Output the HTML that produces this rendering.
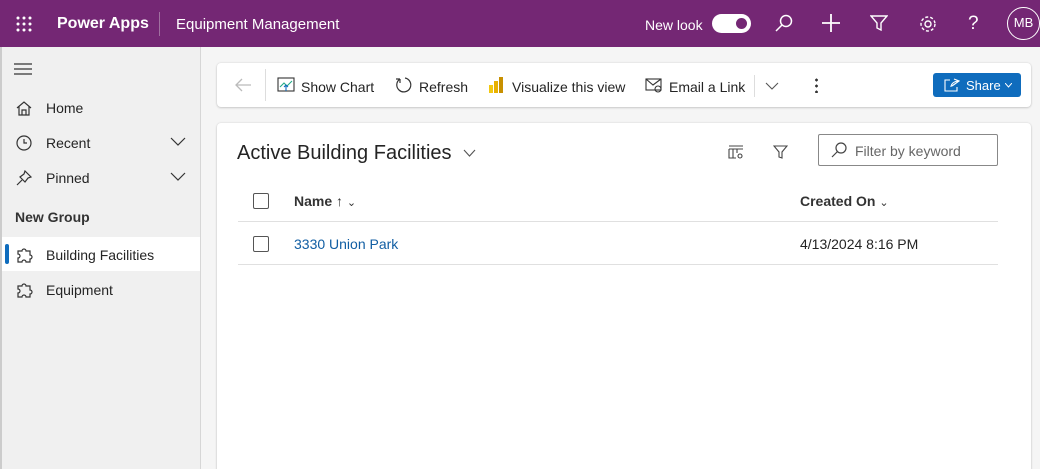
<!DOCTYPE html>
<html><head><style>
*{box-sizing:border-box;margin:0;padding:0}
html,body{width:1040px;height:469px;overflow:hidden}
body{font-family:"Liberation Sans",sans-serif;background:#f5f5f5;position:relative;color:#242424}
.hdr{position:absolute;left:0;top:0;width:1040px;height:47px;background:#742774;color:#fff}
.abs{position:absolute}
.side{position:absolute;left:0;top:47px;width:201px;height:422px;background:#f0f0f0;border-right:1px solid #d6d6d6;border-left:2px solid #ccc}
.nav{position:absolute;left:0;width:198px;height:34px;font-size:14px;color:#242424}
.nav span{position:absolute;left:44px;top:10px}
.card{position:absolute;background:#fff;border-radius:4px;box-shadow:0 0 2px rgba(0,0,0,.12),0 1px 2px rgba(0,0,0,.14)}
.tb{font-size:14px;color:#242424;position:absolute;top:79px}
</style></head><body>
<div class="hdr">
 <svg class="abs" style="left:16px;top:16px" width="16" height="16" fill="#fff"><circle cx="2" cy="2" r="1.5"/><circle cx="8" cy="2" r="1.5"/><circle cx="14" cy="2" r="1.5"/><circle cx="2" cy="8" r="1.5"/><circle cx="8" cy="8" r="1.5"/><circle cx="14" cy="8" r="1.5"/><circle cx="2" cy="14" r="1.5"/><circle cx="8" cy="14" r="1.5"/><circle cx="14" cy="14" r="1.5"/></svg>
 <div class="abs" style="left:57px;top:15px;font-size:16px;font-weight:bold">Power Apps</div>
 <div class="abs" style="left:159px;top:12px;width:1px;height:24px;background:#a070a0"></div>
 <div class="abs" style="left:176px;top:16px;font-size:15px">Equipment Management</div>
 <div class="abs" style="left:645px;top:17px;font-size:14px">New look</div>
 <div class="abs" style="left:712px;top:14px;width:39px;height:19px;border-radius:10px;background:#fff"><div style="position:absolute;right:4px;top:4px;width:11px;height:11px;border-radius:50%;background:#742774"></div></div>
 <svg class="abs" style="left:774px;top:13px" width="20" height="20" fill="none" stroke="#fff" stroke-width="1.5"><circle cx="12" cy="8" r="5.5"/><path d="M8 12 L2 18"/></svg>
 <svg class="abs" style="left:821px;top:13px" width="20" height="20" stroke="#fff" stroke-width="1.8"><path d="M10 1V19M1 10H19"/></svg>
 <svg class="abs" style="left:870px;top:14px" width="18" height="18" fill="none" stroke="#fff" stroke-width="1.4"><path d="M1 2H17L11 9V16L7 14V9Z"/></svg>
 <svg class="abs" style="left:918px;top:14px" width="20" height="20" fill="none" stroke="#fff" stroke-width="1.4"><circle cx="10" cy="10" r="3"/><circle cx="10" cy="10" r="7" stroke-dasharray="3 2"/></svg>
 <div class="abs" style="left:968px;top:13px;font-size:19px">?</div>
 <div class="abs" style="left:1007px;top:7px;width:33px;height:33px;border:1.5px solid #fff;border-radius:50%;font-size:13px;text-align:center;line-height:30px">MB</div>
</div>
<div class="side">
 <svg class="abs" style="left:12px;top:16px" width="18" height="12" stroke="#333" stroke-width="1.2"><path d="M0 1H18M0 6H18M0 11H18"/></svg>
 <div class="nav" style="top:43px"><svg class="abs" style="left:14px;top:10px" width="16" height="16" fill="none" stroke="#333" stroke-width="1.2"><path d="M1 8L8 2L15 8M3 6V15H13V6M6 15V10H10V15"/></svg><span>Home</span></div>
 <div class="nav" style="top:78px"><svg class="abs" style="left:14px;top:10px" width="16" height="16" fill="none" stroke="#333" stroke-width="1.2"><circle cx="8" cy="8" r="7"/><path d="M8 4V8H11"/></svg><span>Recent</span><svg class="abs" style="left:168px;top:12px" width="16" height="9" fill="none" stroke="#333" stroke-width="1.2"><path d="M1 1L8 8L15 1"/></svg></div>
 <div class="nav" style="top:113px"><svg class="abs" style="left:14px;top:10px" width="16" height="16" fill="none" stroke="#333" stroke-width="1.2"><path d="M9 1L15 7L12 8L9 12L4 7L8 4Z M6 10L1 15"/></svg><span>Pinned</span><svg class="abs" style="left:168px;top:12px" width="16" height="9" fill="none" stroke="#333" stroke-width="1.2"><path d="M1 1L8 8L15 1"/></svg></div>
 <div class="abs" style="left:13px;top:162px;font-size:14px;font-weight:bold;color:#333">New Group</div>
 <div class="nav" style="top:190px;background:#fff"><div class="abs" style="left:3px;top:7px;width:4px;height:20px;background:#0f6cbd;border-radius:2px"></div><svg class="abs" style="left:14px;top:9px" width="17" height="17" fill="none" stroke="#333" stroke-width="1.2"><path d="M2 5H6A2 2 0 0 1 10 5H14V9A2 2 0 0 1 14 13V16H10A2 2 0 0 0 6 16H2V12A2 2 0 0 0 2 8Z"/></svg><span>Building Facilities</span></div>
 <div class="nav" style="top:225px"><svg class="abs" style="left:14px;top:9px" width="17" height="17" fill="none" stroke="#333" stroke-width="1.2"><path d="M2 5H6A2 2 0 0 1 10 5H14V9A2 2 0 0 1 14 13V16H10A2 2 0 0 0 6 16H2V12A2 2 0 0 0 2 8Z"/></svg><span>Equipment</span></div>
</div>
<div class="card" style="left:217px;top:63px;width:814px;height:44px"></div>
<svg class="abs" style="left:235px;top:78px" width="16" height="14" fill="none" stroke="#bbb" stroke-width="1.3"><path d="M16 7H1M7 1L1 7L7 13"/></svg>
<div class="abs" style="left:265px;top:69px;width:1px;height:32px;background:#ddd"></div>
<svg class="abs" style="left:277px;top:77px" width="18" height="16" fill="none" stroke="#333" stroke-width="1.1"><rect x="1" y="1" width="16" height="13"/><path d="M3 10L7 6L10 9L15 4" stroke="#2a8"/><path d="M9 14V8M7 10L9 8L11 10" stroke="#0f6cbd"/></svg>
<div class="tb" style="left:301px">Show Chart</div>
<svg class="abs" style="left:395px;top:76px" width="18" height="18" fill="none" stroke="#333" stroke-width="1.2"><path d="M5 3A7 7 0 1 0 10 2M5 3V7M5 3H1"/></svg>
<div class="tb" style="left:419px">Refresh</div>
<svg class="abs" style="left:489px;top:77px" width="14" height="16"><rect x="0" y="8" width="4" height="8" fill="#f2c811"/><rect x="5" y="4" width="4" height="12" fill="#e8b000"/><rect x="10" y="0" width="4" height="16" fill="#c89000"/></svg>
<div class="tb" style="left:512px">Visualize this view</div>
<svg class="abs" style="left:645px;top:78px" width="18" height="15" fill="none" stroke="#333" stroke-width="1.1"><rect x="1" y="1" width="15" height="11"/><path d="M1 1L8 7L16 1"/><circle cx="13" cy="11" r="3"/></svg>
<div class="tb" style="left:669px">Email a Link</div>
<div class="abs" style="left:754px;top:75px;width:1px;height:22px;background:#ddd"></div>
<svg class="abs" style="left:765px;top:82px" width="14" height="8" fill="none" stroke="#555" stroke-width="1.1"><path d="M1 1L7 7L13 1"/></svg>
<div class="abs" style="left:815px;top:77px;width:3px;height:16px;background:radial-gradient(circle,#333 1.3px,transparent 1.5px) 0 0/3px 6px"></div>
<div class="abs" style="left:933px;top:73px;width:88px;height:24px;background:#0f6cbd;border-radius:3px;color:#fff;font-size:13px"><svg class="abs" style="left:11px;top:5px" width="16" height="14" fill="none" stroke="#fff" stroke-width="1.1"><path d="M6 2H1V13H13V9M8 8L15 3L10 1M15 3C10 3 7 6 7 9"/></svg><span class="abs" style="left:33px;top:5px">Share</span><svg class="abs" style="left:72px;top:10px" width="7" height="5" fill="none" stroke="#fff"><path d="M0 0L3.5 4L7 0"/></svg></div>
<div class="card" style="left:217px;top:123px;width:814px;height:350px"></div>
<div class="abs" style="left:237px;top:142px;font-size:20px;color:#242424">Active Building Facilities</div>
<svg class="abs" style="left:463px;top:149px" width="13" height="8" fill="none" stroke="#555" stroke-width="1.1"><path d="M1 1L6.5 7L12 1"/></svg>
<svg class="abs" style="left:728px;top:145px" width="16" height="14" fill="none" stroke="#444" stroke-width="1.1"><path d="M1 1H15M1 4H15M1 4V13H8M5 4V13M9 4V8"/><circle cx="12" cy="11" r="2"/></svg>
<svg class="abs" style="left:773px;top:145px" width="15" height="15" fill="none" stroke="#444" stroke-width="1.1"><path d="M1 1H14L9 7V13L6 12V7Z"/></svg>
<div class="abs" style="left:818px;top:134px;width:180px;height:32px;border:1px solid #888;border-radius:2px;background:#fff"><svg class="abs" style="left:12px;top:7px" width="16" height="16" fill="none" stroke="#444" stroke-width="1.2"><circle cx="10" cy="6" r="5"/><path d="M6.5 9.5L1 15"/></svg><span class="abs" style="left:36px;top:8px;font-size:14px;color:#666">Filter by keyword</span></div>
<div class="abs" style="left:238px;top:221px;width:760px;height:1px;background:#e0e0e0"></div>
<div class="abs" style="left:238px;top:264px;width:760px;height:1px;background:#e0e0e0"></div>
<div class="abs" style="left:253px;top:193px;width:16px;height:16px;border:1px solid #555;border-radius:2px"></div>
<div class="abs" style="left:294px;top:193px;font-size:14px;font-weight:bold;color:#333">Name ↑ <span style="font-weight:normal;font-size:11px">⌄</span></div>
<div class="abs" style="left:800px;top:193px;font-size:14px;font-weight:bold;color:#333">Created On <span style="font-weight:normal;font-size:11px">⌄</span></div>
<div class="abs" style="left:253px;top:236px;width:16px;height:16px;border:1px solid #555;border-radius:2px"></div>
<div class="abs" style="left:294px;top:236px;font-size:14px;color:#115ea3">3330 Union Park</div>
<div class="abs" style="left:800px;top:236px;font-size:14px;color:#242424">4/13/2024 8:16 PM</div>
</body></html>
